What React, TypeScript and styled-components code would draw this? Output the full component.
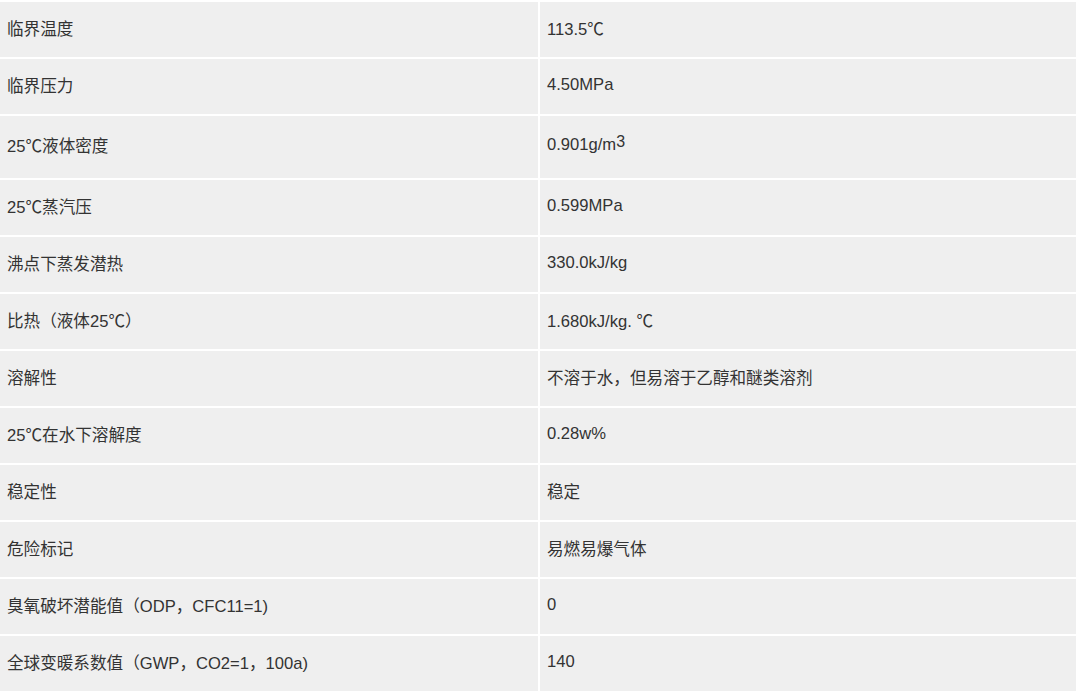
import React from 'react';
import styled, { createGlobalStyle } from 'styled-components';

interface RowProps {
  name: string,
  value: React.ReactNode,
  tall?: boolean
}

const GlobalStyle = createGlobalStyle`
  body {
    margin: 0;
    background: #ffffff;
  }
`;

const Table = styled.div`
  display: grid;
  grid-template-columns: 538px 536px;
  column-gap: 2px;
  row-gap: 2px;
  padding-top: 2px;
  width: 1076px;
  background: #ffffff;
  font-family: 'Liberation Sans', 'Noto Sans CJK SC', sans-serif;
  font-size: 16.6px;
  color: #333333;
`;

const Cell = styled.div<{ $tall?: boolean }>`
  display: flex;
  align-items: center;
  box-sizing: border-box;
  height: ${p => (p.$tall ? '62px' : '55px')};
  padding: 0 7px 4px;
  background: #efefef;
  white-space: nowrap;
`;

const Sup = styled.sup`
  font-size: 16px;
  line-height: 0;
  position: relative;
  top: -3px;
`;

const rows: RowProps[] = [
  { name: '临界温度', value: '113.5℃' },
  { name: '临界压力', value: '4.50MPa' },
  { name: '25℃液体密度', value: <>0.901g/m<Sup>3</Sup></>, tall: true },
  { name: '25℃蒸汽压', value: '0.599MPa' },
  { name: '沸点下蒸发潜热', value: '330.0kJ/kg' },
  { name: '比热（液体25℃）', value: '1.680kJ/kg. ℃' },
  { name: '溶解性', value: '不溶于水，但易溶于乙醇和醚类溶剂' },
  { name: '25℃在水下溶解度', value: '0.28w%' },
  { name: '稳定性', value: '稳定' },
  { name: '危险标记', value: '易燃易爆气体' },
  { name: '臭氧破坏潜能值（ODP，CFC11=1)', value: '0' },
  { name: '全球变暖系数值（GWP，CO2=1，100a)', value: '140' },
];

export default function App() {
  return (
    <>
      <GlobalStyle />
      <Table>
        {rows.map((row, index) => (
          <React.Fragment key={index}>
            <Cell $tall={row.tall}>{row.name}</Cell>
            <Cell $tall={row.tall}>{row.value}</Cell>
          </React.Fragment>
        ))}
      </Table>
    </>
  );
}
